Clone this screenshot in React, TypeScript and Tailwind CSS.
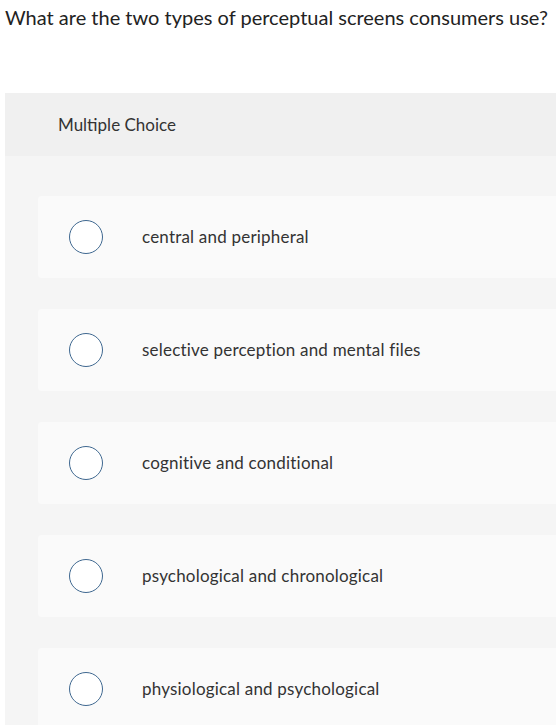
import React from 'react';

const options = [
  'central and peripheral',
  'selective perception and mental files',
  'cognitive and conditional',
  'psychological and chronological',
  'physiological and psychological',
];

const App: React.FC = () => {
  return (
    <div className="w-[556px] h-[725px] overflow-hidden bg-white font-['Lato',sans-serif] text-[#333]">
      <h1 className="pl-[5px] pt-[5px] text-[20px] leading-[25px] text-[#222]">
        What are the two types of perceptual screens consumers use?
      </h1>
      <div className="ml-[5px] mt-[63px] bg-[#f5f5f5]">
        <div className="h-[63px] bg-[#f0f0f0] pl-[53px] flex items-center text-[17px]">
          Multiple Choice
        </div>
        <div className="pt-[40px] pl-[33px] flex flex-col gap-[31px]">
          {options.map((opt) => (
            <label
              key={opt}
              className="h-[82px] bg-[#fafafa] rounded-l-[4px] flex items-center cursor-pointer"
            >
              <span className="ml-[31px] w-[34px] h-[34px] rounded-full border-[1.5px] border-[#3f6890] bg-white shrink-0" />
              <span className="ml-[39px] text-[17px] tracking-[0.2px]">{opt}</span>
            </label>
          ))}
        </div>
      </div>
    </div>
  );
};

export default App;
